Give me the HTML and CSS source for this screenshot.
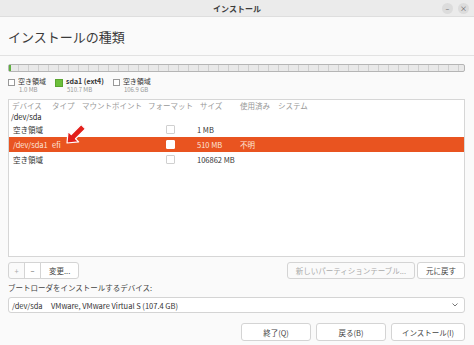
FILE: index.html
```html
<!DOCTYPE html>
<html lang="ja">
<head>
    <meta charset="UTF-8">
    <title>インストール</title>
    <link rel="stylesheet" href="styles.css">
</head>
<body>
    <div class="titlebar">
        <span class="title">インストール</span>
        <div class="win-buttons">
            <span class="win-btn">&#8211;</span>
            <span class="win-btn">&#215;</span>
        </div>
    </div>
    <header class="page-head">
        <h1>インストールの種類</h1>
    </header>
    <div class="content">
        <div class="disk-bar">
            <div class="disk-used"></div>
        </div>
        <div class="legend">
            <div class="legend-item">
                <span class="swatch"></span>
                <div>
                    <div class="legend-name">空き領域</div>
                    <div class="legend-size">1.0 MB</div>
                </div>
            </div>
            <div class="legend-item">
                <span class="swatch green"></span>
                <div>
                    <div class="legend-name bold">sda1 (ext4)</div>
                    <div class="legend-size">510.7 MB</div>
                </div>
            </div>
            <div class="legend-item">
                <span class="swatch"></span>
                <div>
                    <div class="legend-name">空き領域</div>
                    <div class="legend-size">106.9 GB</div>
                </div>
            </div>
        </div>

        <div class="table">
            <div class="row head">
                <span class="c-dev">デバイス</span>
                <span class="c-type">タイプ</span>
                <span class="c-mount">マウントポイント</span>
                <span class="c-fmt">フォーマット</span>
                <span class="c-size">サイズ</span>
                <span class="c-used">使用済み</span>
                <span class="c-sys">システム</span>
            </div>
            <div class="row disk">/dev/sda</div>
            <div class="row part">
                <span class="c-dev">空き領域</span>
                <span class="c-type"></span>
                <span class="c-mount"></span>
                <span class="c-fmt"><span class="check"></span></span>
                <span class="c-size">1 MB</span>
            </div>
            <div class="row part selected">
                <span class="c-dev">/dev/sda1</span>
                <span class="c-type">efi</span>
                <span class="c-mount"></span>
                <span class="c-fmt"><span class="check"></span></span>
                <span class="c-size">510 MB</span>
                <span class="c-used">不明</span>
            </div>
            <div class="row part">
                <span class="c-dev">空き領域</span>
                <span class="c-type"></span>
                <span class="c-mount"></span>
                <span class="c-fmt"><span class="check"></span></span>
                <span class="c-size">106862 MB</span>
            </div>
            <!-- annotation arrow pointing at the efi row -->
            <svg class="arrow" width="24" height="24" viewBox="0 0 24 24">
                <g transform="translate(3,21) rotate(-45)">
                    <path d="M0 0 L9 -7.5 L9 -3 L23 -3 L23 3 L9 3 L9 7.5 Z" fill="#e3201b" stroke="#fff" stroke-width="1.2" stroke-linejoin="round"/>
                </g>
            </svg>
        </div>

        <div class="toolbar">
            <div class="btn-group">
                <button class="btn small" disabled>+</button>
                <button class="btn small">&#8211;</button>
                <button class="btn">変更...</button>
            </div>
            <div class="toolbar-right">
                <button class="btn" disabled>新しいパーティションテーブル...</button>
                <button class="btn">元に戻す</button>
            </div>
        </div>

        <div class="boot-label">ブートローダをインストールするデバイス:</div>
        <div class="combo">
            <span>/dev/sda&nbsp;&nbsp;&nbsp;&nbsp;&nbsp;VMware, VMware Virtual S (107.4 GB)</span>
            <svg width="8" height="6" viewBox="0 0 8 6"><path d="M1.5 1.5 L4 4 L6.5 1.5" fill="none" stroke="#777" stroke-width="1"/></svg>
        </div>

        <div class="actions">
            <button class="btn wide">終了(Q)</button>
            <button class="btn wide">戻る(B)</button>
            <button class="btn wide install">インストール(I)</button>
        </div>
    </div>
</body>
</html>
```

FILE: styles.css
```css
body {
    margin: 0;
    font-family: "Noto Sans CJK JP", "Noto Sans", sans-serif;
    background-color: #fafafa;
    color: #333;
    font-size: 8px;
    width: 474px;
    height: 345px;
    overflow: hidden;
}
.titlebar {
    height: 16px;
    background-color: #ebebeb;
    border-bottom: 1px solid #dedede;
    display: flex;
    align-items: center;
    justify-content: center;
    position: relative;
}
.title {
    font-weight: bold;
    font-size: 8px;
    color: #3c3c3c;
}
.win-buttons {
    position: absolute;
    right: 5px;
    top: 3px;
    display: flex;
    gap: 5px;
}
.win-btn {
    width: 11px;
    height: 11px;
    border-radius: 50%;
    background-color: #dcdcdc;
    color: #555;
    font-size: 7px;
    line-height: 11px;
    text-align: center;
}
.page-head {
    height: 38px;
    border-bottom: 1px solid #e2e2e2;
    display: flex;
    align-items: center;
    padding-left: 8px;
}
h1 {
    margin: 0;
    font-size: 13px;
    font-weight: normal;
    color: #3a3a3a;
}
.content {
    padding: 8px 9px 0 8px;
}
.disk-bar {
    height: 6px;
    border: 1px solid #b5b5b5;
    border-radius: 2px;
    background: repeating-linear-gradient(90deg, #e9e9e9 0, #e9e9e9 9px, #cfcfcf 9px, #cfcfcf 10px);
    display: flex;
}
.disk-used {
    width: 2px;
    background-color: #5fb040;
}
.legend {
    display: flex;
    gap: 9px;
    margin-top: 4px;
    height: 21px;
}
.legend-item {
    display: flex;
    gap: 3px;
}
.swatch {
    width: 5px;
    height: 5px;
    border: 1px solid #999;
    background-color: #fff;
    margin-top: 3px;
}
.swatch.green {
    background-color: #6cbf3a;
    border-color: #5aa52f;
    width: 6px;
    height: 6px;
}
.legend-name {
    font-size: 7px;
    line-height: 10px;
    color: #333;
}
.legend-name.bold {
    font-weight: bold;
}
.legend-size {
    font-size: 6px;
    color: #999;
    line-height: 8px;
    padding-left: 1px;
}
.table {
    margin-top: 2px;
    height: 156px;
    border: 1px solid #d6d6d6;
    background-color: #fff;
    position: relative;
}
.row {
    display: flex;
    align-items: center;
    height: 15px;
    font-size: 7.5px;
    padding-left: 3px;
}
.row.head {
    color: #999;
    height: 11px;
}
.row.disk {
    height: 11px;
    padding-left: 2px;
    color: #222;
}
.row.part {
    padding-left: 4px;
}
.row.selected {
    background-color: #e95420;
    color: #fde6dc;
}
.c-dev { width: 40px; }
.c-type { width: 30px; }
.c-mount { width: 66px; }
.c-fmt { width: 52px; }
.c-size { width: 40px; }
.c-used { width: 38px; }
.c-sys { width: 40px; }
.part .c-dev { width: 39px; }
.part .c-fmt { width: 49px; }
.part .c-size { width: 43px; }
.check {
    width: 7px;
    height: 7px;
    margin-left: 18px;
    border: 1px solid #d0d0d0;
    border-radius: 1px;
    background-color: #fff;
    display: block;
}
.selected .check {
    border-color: #fff;
}
.arrow {
    position: absolute;
    left: 55px;
    top: 22px;
}
.toolbar {
    display: flex;
    justify-content: space-between;
    margin-top: 5px;
    height: 17px;
}
.btn-group {
    display: flex;
}
.btn-group .btn {
    border-radius: 0;
    margin-left: -1px;
}
.btn-group .btn:first-child {
    border-radius: 3px 0 0 3px;
    margin-left: 0;
}
.btn-group .btn:last-child {
    border-radius: 0 3px 3px 0;
}
.toolbar-right {
    display: flex;
    gap: 2px;
}
.btn {
    font-family: "Noto Sans CJK JP", "Noto Sans", sans-serif;
    font-size: 7.5px;
    color: #444;
    background-color: #fff;
    border: 1px solid #d4d4d4;
    border-radius: 3px;
    padding: 0 8px;
    height: 17px;
}
.btn:disabled {
    color: #aaa;
    background-color: #fafafa;
}
.btn.small {
    width: 17px;
    padding: 0;
}
.btn.wide {
    width: 70px;
    height: 18px;
}
.btn.install {
    width: 74px;
}
.boot-label {
    margin-top: 3px;
    font-size: 7.5px;
    color: #444;
    line-height: 12px;
}
.combo {
    margin-top: 3px;
    height: 14px;
    border: 1px solid #d4d4d4;
    border-radius: 3px;
    background-color: #fff;
    display: flex;
    align-items: center;
    justify-content: space-between;
    padding: 0 5px 0 3px;
    font-size: 7.5px;
    color: #333;
}
.actions {
    display: flex;
    justify-content: flex-end;
    gap: 5px;
    margin-top: 10px;
}
```
